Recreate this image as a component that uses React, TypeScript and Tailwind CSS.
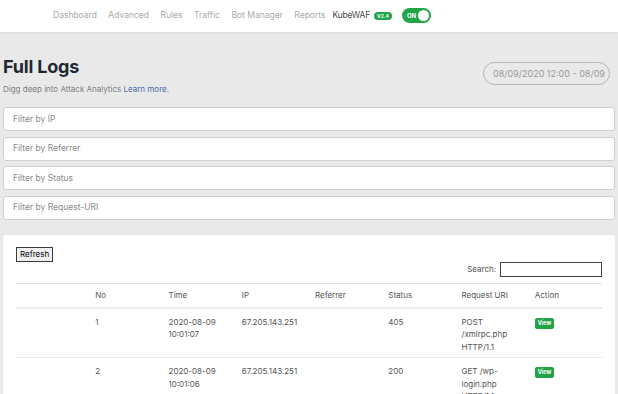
import React from "react";

const navItems = ["Dashboard", "Advanced", "Rules", "Traffic", "Bot Manager", "Reports"];

const filters = ["Filter by IP", "Filter by Referrer", "Filter by Status", "Filter by Request-URI"];

const columns = ["", "No", "Time", "IP", "Referrer", "Status", "Request URI", "Action"];

const rows = [
  { no: "1", time: ["2020-08-09", "10:01:07"], ip: "67.205.143.251", status: "405", uri: ["POST", "/xmlrpc.php", "HTTP/1.1"] },
  { no: "2", time: ["2020-08-09", "10:01:06"], ip: "67.205.143.251", status: "200", uri: ["GET /wp-", "login.php", "HTTP/1.1"] },
];

const TopNav = () => (
  <div className="h-[32px] bg-white flex items-center pl-[53px] pb-[1px] shadow-[0_1px_2px_rgba(0,0,0,0.06)]">
    <div className="flex items-center gap-[11.5px] text-[8.5px] text-[#aaaaaa]">
      {navItems.map((item) => (
        <span key={item}>{item}</span>
      ))}
    </div>
    <span className="ml-[7px] text-[8.5px] text-[#4b4b4b] tracking-[-0.2px]">KubeWAF</span>
    <span className="ml-[4px] h-[8px] px-[3px] rounded-full bg-[#22a447] text-white text-[5px] font-bold leading-[8px]">
      V2.4
    </span>
    <div className="ml-[10px] w-[29px] h-[15px] rounded-full bg-[#22a447] flex items-center justify-between pl-[5px] pr-[2px]">
      <span className="text-white text-[6px] font-bold">ON</span>
      <span className="w-[11px] h-[11px] rounded-full bg-white" />
    </div>
  </div>
);

const App = () => {
  return (
    <div className="w-[618px] h-[394px] overflow-hidden bg-[#e9e9e9] font-['Inter','Liberation_Sans',sans-serif]">
      <TopNav />
      <div className="px-[3px]">
        <div className="flex items-start justify-between pt-[23px]">
          <div>
            <h1 className="text-[18px] leading-[24px] font-bold text-[#1f2933] tracking-[-0.2px]">Full Logs</h1>
            <p className="mt-[4px] text-[8px] text-[#7d7d7d]">
              Digg deep into Attack Analytics <span className="text-[#4a6aa8]">Learn more.</span>
            </p>
          </div>
          <div className="mt-[7px] mr-[5px] h-[23px] w-[127px] rounded-full border border-[#b5b5b5] flex items-center pl-[9px] overflow-hidden whitespace-nowrap text-[9px] text-[#9a9a9a]">
            08/09/2020 12:00 - 08/09
          </div>
        </div>

        <div className="mt-[12px] flex flex-col gap-[5.5px]">
          {filters.map((f) => (
            <div
              key={f}
              className="h-[24px] bg-white border border-[#cfcfcf] rounded-[3px] flex items-center pl-[9px] text-[8.5px] text-[#8a8a8a]"
            >
              {f}
            </div>
          ))}
        </div>

        <div className="mt-[15px] bg-white rounded-[3px] px-[13px] pt-[12px] h-[200px]">
          <button className="block h-[15px] px-[3px] border border-[#3a3a3a] bg-[#f0f0f0] text-[8px] text-black leading-none">
            Refresh
          </button>
          <div className="flex justify-end items-center gap-[4px]">
            <span className="text-[8px] text-[#555]">Search:</span>
            <div className="w-[102px] h-[15px] border border-[#444]" />
          </div>
          <div className="mt-[6px] border-t border-[#e3e3e3]">
            <div className="grid grid-cols-8 h-[25px] items-center border-b-2 border-[#ececec] text-[8px] text-[#555]">
              {columns.map((c, i) => (
                <div key={i} className="pl-[6px]">
                  {c}
                </div>
              ))}
            </div>
            {rows.map((r) => (
              <div key={r.no} className="grid grid-cols-8 pt-[7px] pb-[4px] border-b border-[#ececec] text-[8px] leading-[12.5px] text-[#555]">
                <div />
                <div className="pl-[6px]">{r.no}</div>
                <div className="pl-[6px]">
                  {r.time.map((t) => (
                    <div key={t}>{t}</div>
                  ))}
                </div>
                <div className="pl-[6px]">{r.ip}</div>
                <div />
                <div className="pl-[6px]">{r.status}</div>
                <div className="pl-[6px]">
                  {r.uri.map((t) => (
                    <div key={t}>{t}</div>
                  ))}
                </div>
                <div className="pl-[6px]">
                  <span className="inline-block px-[3px] h-[11px] leading-[11px] rounded-[2px] bg-[#22a447] text-white text-[5.5px] font-bold">
                    View
                  </span>
                </div>
              </div>
            ))}
          </div>
        </div>
      </div>
    </div>
  );
};

export default App;
